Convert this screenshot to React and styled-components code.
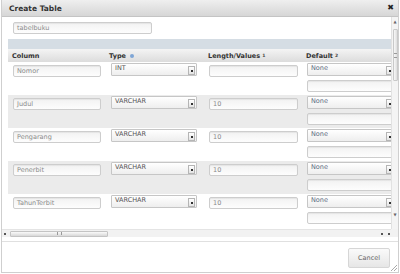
import styled, { createGlobalStyle } from 'styled-components';

const GlobalStyle = createGlobalStyle`
  html, body {
    margin: 0;
    padding: 0;
    background: #ffffff;
    font-family: "DejaVu Sans", Verdana, sans-serif;
  }
`;

const Dialog = styled.div`
  width: 396px;
  height: 272px;
  margin-left: 1px;
  border: 1px solid #cfcfcf;
  border-top: none;
  background: #fff;
  display: flex;
  flex-direction: column;
  overflow: hidden;
  position: relative;
`;

const TitleBar = styled.div`
  height: 17px;
  flex-shrink: 0;
  display: flex;
  align-items: center;
  justify-content: space-between;
  padding: 0 4px 0 7px;
  background: linear-gradient(#efefef, #d6d6d6);
  border-bottom: 1px solid #c4c4c4;
  box-sizing: border-box;
`;

const Title = styled.span`
  font-size: 7.5px;
  font-weight: bold;
  color: #333;
`;

const Close = styled.span`
  font-size: 8px;
  font-weight: bold;
  color: #222;
  line-height: 1;
`;

const ScrollFrame = styled.div`
  display: grid;
  grid-template-columns: 389px 7px;
  grid-template-rows: 212px 8px;
  flex-shrink: 0;
`;

const Viewport = styled.div`
  overflow: hidden;
  padding: 5px 0 0 6px;
`;

const NameRow = styled.div`
  padding-left: 5px;
  height: 17px;
`;

const Field = styled.div`
  box-sizing: border-box;
  width: ${(p) => p.$w}px;
  height: 12px;
  border: 1px solid #cdcdcd;
  border-radius: 2px;
  background: linear-gradient(#f2f2f2, #fdfdfd);
  box-shadow: inset 0 1px 1px rgba(0, 0, 0, 0.06);
  font-size: 6.5px;
  color: #8a8a8a;
  padding-left: 3px;
  line-height: 10px;
  white-space: nowrap;
  overflow: hidden;
`;

const Band = styled.div`
  height: 10px;
  background: #d5dde4;
  width: 400px;
`;

const Header = styled.div`
  display: grid;
  grid-template-columns: 97px 99px 98px 110px;
  width: 404px;
  height: 13px;
  background: linear-gradient(#f4f4f4, #dcdcdc);
  align-items: center;
`;

const HeadCell = styled.div`
  font-size: 6.5px;
  font-weight: bold;
  color: #333;
  padding-left: 4px;
  white-space: nowrap;
  display: flex;
  align-items: center;
  gap: 2px;
`;

const Sup = styled.sup`
  font-size: 4.5px;
  line-height: 0;
  color: #444;
`;

const Info = styled.span`
  width: 4px;
  height: 4px;
  border-radius: 50%;
  background: #7fa6d6;
  margin-left: 2px;
`;

const Row = styled.div`
  display: grid;
  grid-template-columns: 97px 99px 98px 110px;
  width: 404px;
  height: 33px;
  background-color: ${(p) => (p.$alt ? '#ebebeb' : '#ffffff')};
`;

const Cell = styled.div`
  padding-left: ${(p) => p.$pl}px;
  padding-top: ${(p) => p.$pt}px;
  display: flex;
  flex-direction: column;
  gap: 4px;
`;

const Select = styled.div`
  box-sizing: border-box;
  width: ${(p) => p.$w || 86}px;
  height: 13px;
  border: 1px solid #c6c6c6;
  border-radius: 1px;
  background: linear-gradient(#ffffff, #eeeeee);
  display: flex;
  align-items: flex-start;
  justify-content: space-between;
  font-size: 6.5px;
  color: ${(p) => p.$c};
  padding-left: 3px;
  line-height: 9px;
  flex-shrink: 0;
`;

const Arrow = styled.span`
  width: 5px;
  height: 7px;
  margin: 2px 1px 0 0;
  border: 1px solid #b5b5b5;
  background: linear-gradient(#fff, #e4e4e4);
  display: flex;
  align-items: center;
  justify-content: center;
  &::after {
    content: '';
    width: 2px;
    height: 2px;
    background: #333;
  }
`;

const VScroll = styled.div`
  background: #f4f4f4;
  border-left: 1px solid #e2e2e2;
  display: flex;
  flex-direction: column;
  align-items: center;
`;

const VThumb = styled.div`
  width: 5px;
  height: 52px;
  margin-top: 5px;
  border: 1px solid #c9c9c9;
  border-radius: 1px;
  background: linear-gradient(90deg, #f8f8f8, #dedede);
  display: flex;
  align-items: center;
  justify-content: center;
  box-sizing: border-box;
  &::after {
    content: '';
    width: 3px;
    height: 3px;
    border-top: 1px solid #999;
    border-bottom: 1px solid #999;
  }
`;

const ArrowGlyph = styled.span`
  font-size: 4px;
  color: #666;
  line-height: 1;
  margin-top: ${(p) => p.$mt || 0}px;
`;

const HScroll = styled.div`
  background: #f2f2f2;
  border-top: 1px solid #e4e4e4;
  display: flex;
  align-items: center;
  padding-left: 1px;
  gap: 3px;
`;

const HThumb = styled.div`
  width: 98px;
  height: 6px;
  box-sizing: border-box;
  border: 1px solid #c4c4c4;
  border-radius: 1px;
  background: linear-gradient(#fafafa, #d8d8d8);
  display: flex;
  align-items: center;
  justify-content: center;
  &::after {
    content: '';
    width: 3px;
    height: 3px;
    border-left: 1px solid #999;
    border-right: 1px solid #999;
  }
`;

const Dot = styled.span`
  width: 2px;
  height: 2px;
  background: #555;
  margin: 0 1px;
`;

const Spacer = styled.span`
  flex: 1;
`;

const Corner = styled.div`
  background: #f2f2f2;
`;

const Footer = styled.div`
  flex: 1;
  border-top: 1px solid #e0e0e0;
  margin-top: 4px;
  display: flex;
  justify-content: flex-end;
  align-items: flex-start;
  padding: 6px 8px 0 0;
  position: relative;
`;

const Button = styled.button`
  width: 42px;
  height: 20px;
  border: 1px solid #d6d6d6;
  border-radius: 2px;
  background: linear-gradient(#fafafa, #e6e6e6);
  font-family: "DejaVu Sans", Verdana, sans-serif;
  font-size: 6.5px;
  color: #666;
  padding: 0;
`;

const Grip = styled.span`
  position: absolute;
  right: 1px;
  bottom: 1px;
  width: 6px;
  height: 6px;
  background: linear-gradient(135deg, transparent 45%, #aaa 45%, #aaa 55%, transparent 55%, transparent 70%, #aaa 70%, #aaa 80%, transparent 80%);
`;

const columns = [
  { name: 'Nomor', type: 'INT', len: '' },
  { name: 'Judul', type: 'VARCHAR', len: '10' },
  { name: 'Pengarang', type: 'VARCHAR', len: '10' },
  { name: 'Penerbit', type: 'VARCHAR', len: '10' },
  { name: 'TahunTerbit', type: 'VARCHAR', len: '10' },
];

export default function App() {
  return (
    <>
      <GlobalStyle />
      <Dialog>
        <TitleBar>
          <Title>Create Table</Title>
          <Close>✖</Close>
        </TitleBar>
        <ScrollFrame>
          <Viewport>
            <NameRow>
              <Field $w={139}>tabelbuku</Field>
            </NameRow>
            <Band />
            <Header>
              <HeadCell>Column</HeadCell>
              <HeadCell>
                Type<Info />
              </HeadCell>
              <HeadCell>
                Length/Values<Sup>1</Sup>
              </HeadCell>
              <HeadCell>
                Default<Sup>2</Sup>
              </HeadCell>
            </Header>
            {columns.map((c, i) => (
              <Row key={c.name} $alt={i % 2 === 1}>
                <Cell $pl={5} $pt={3}>
                  <Field $w={88}>{c.name}</Field>
                </Cell>
                <Cell $pl={6} $pt={1}>
                  <Select $c="#555">
                    {c.type}
                    <Arrow />
                  </Select>
                </Cell>
                <Cell $pl={5} $pt={3}>
                  <Field $w={89}>{c.len}</Field>
                </Cell>
                <Cell $pl={5} $pt={1}>
                  <Select $c="#5a6a80" $w={88}>
                    None
                    <Arrow />
                  </Select>
                  <Field $w={88}></Field>
                </Cell>
              </Row>
            ))}
          </Viewport>
          <VScroll>
            <ArrowGlyph $mt={3}>▲</ArrowGlyph>
            <VThumb />
            <ArrowGlyph $mt={132}>▼</ArrowGlyph>
          </VScroll>
          <HScroll>
            <Dot />
            <HThumb />
            <Spacer />
            <Dot />
            <Dot />
          </HScroll>
          <Corner />
        </ScrollFrame>
        <Footer>
          <Button>Cancel</Button>
          <Grip />
        </Footer>
      </Dialog>
    </>
  );
}
